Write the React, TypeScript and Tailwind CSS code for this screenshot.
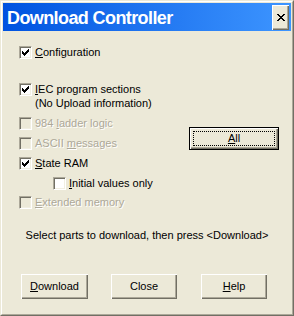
import React from 'react';

const font = { fontFamily: '"Liberation Sans", Arial, sans-serif' };

function Check() {
  return (
    <svg width="7" height="7" viewBox="0 0 7 7" shapeRendering="crispEdges">
      <path
        fill="#000"
        d="M0 2h1v3h-1z M1 3h1v3h-1z M2 4h1v3h-1z M3 3h1v3h-1z M4 2h1v3h-1z M5 1h1v3h-1z M6 0h1v3h-1z"
      />
    </svg>
  );
}

interface BoxProps {
  checked?: boolean;
  disabled?: boolean;
}

function Box({ checked, disabled }: BoxProps) {
  return (
    <span
      className={`flex items-center justify-center w-[13px] h-[13px] shrink-0 border border-t-[#aca899] border-l-[#aca899] border-b-white border-r-white shadow-[inset_1px_1px_0_#716f64,inset_-1px_-1px_0_#f1efe2] ${
        disabled ? 'bg-[#ece9d8]' : 'bg-white'
      }`}
    >
      {checked && <Check />}
    </span>
  );
}

interface RowProps {
  label: string;
  u: number;
  checked?: boolean;
  disabled?: boolean;
  className?: string;
}

function Row({ label, u, checked, disabled, className = '' }: RowProps) {
  return (
    <div className={`flex items-center gap-[3px] h-[13px] ${className}`}>
      <Box checked={checked} disabled={disabled} />
      <span
        className={`text-[11px] leading-[13px] whitespace-nowrap ${
          disabled ? 'text-[#aca899] [text-shadow:1px_1px_0_#fff]' : 'text-black'
        }`}
      >
        {label.slice(0, u)}
        <span className="underline underline-offset-[1px]">{label[u]}</span>
        {label.slice(u + 1)}
      </span>
    </div>
  );
}

const bevel =
  'bg-[#ece9d8] shadow-[inset_1px_1px_0_#fff,inset_-1px_-1px_0_#716f64,inset_-2px_-2px_0_#aca899]';

function Button({ children, className = '' }: { children: React.ReactNode; className?: string }) {
  return (
    <div
      className={`flex items-center justify-center w-[66px] h-[25px] text-[11px] text-black ${bevel} ${className}`}
    >
      {children}
    </div>
  );
}

export default function App() {
  return (
    <div
      style={font}
      className="w-[294px] h-[316px] border border-t-[#ece9d8] border-l-[#ece9d8] border-b-[#716f64] border-r-[#716f64] bg-[#ece9d8]"
    >
      <div className="w-full h-full border border-t-white border-l-white border-b-[#aca899] border-r-[#aca899] p-[1px] flex flex-col">
        {/* title bar */}
        <div className="h-[28px] flex items-center bg-gradient-to-r from-[#0052e0] to-[#3d95ff] pl-[4px] pr-[2px]">
          <span className="text-white font-bold text-[18px] leading-none tracking-[-0.6px] pt-[1px]">
            Download Controller
          </span>
          <div
            className={`ml-auto w-[17px] h-[25px] flex items-center justify-center ${bevel}`}
          >
            <svg width="8" height="7" viewBox="0 0 8 7" shapeRendering="crispEdges">
              <path
                fill="#000"
                d="M0 0h2v1h-2z M6 0h2v1h-2z M1 1h2v1h-2z M5 1h2v1h-2z M2 2h4v1h-4z M3 3h2v1h-2z M2 4h4v1h-4z M1 5h2v1h-2z M5 5h2v1h-2z M0 6h2v1h-2z M6 6h2v1h-2z"
              />
            </svg>
          </div>
        </div>

        {/* body */}
        <div className="flex-1 flex flex-col pt-[15px]">
          <div className="pl-[16px]">
            <Row label="Configuration" u={0} checked />
          </div>

          <div className="flex pl-[16px] mt-[24px]">
            <div className="w-[170px] flex flex-col">
              <Row label="IEC program sections" u={0} checked />
              <div className="mt-[1px] pl-[16px] text-[11px] leading-[13px] text-black">
                (No Upload information)
              </div>
              <Row label="984 ladder logic" u={4} disabled className="mt-[7px]" />
              <Row label="ASCII messages" u={6} disabled className="mt-[7px]" />
              <Row label="State RAM" u={0} checked className="mt-[7px]" />
              <Row label="Initial values only" u={0} className="mt-[7px] ml-[34px]" />
              <Row label="Extended memory" u={0} disabled className="mt-[6px]" />
            </div>
            <div className="mt-[44px]">
              <div className="w-[90px] h-[23px] border border-black">
                <div className="w-full h-full shadow-[inset_1px_1px_0_#fff,inset_-1px_-1px_0_#716f64,inset_-2px_-2px_0_#aca899] p-[3px]">
                  <div className="w-full h-full border border-dotted border-black flex items-center justify-center text-[11px] text-black">
                    <span className="underline underline-offset-[1px]">A</span>ll
                  </div>
                </div>
              </div>
            </div>
          </div>

          <div className="mt-[20px] text-center text-[11px] leading-[13px] text-black">
            Select parts to download, then press &lt;Download&gt;
          </div>

          <div className="flex mt-[32px] pl-[18px]">
            <Button className="w-[67px]">
              <span className="underline underline-offset-[1px]">D</span>ownload
            </Button>
            <Button className="ml-[23px]">Close</Button>
            <Button className="ml-[24px]">
              <span className="underline underline-offset-[1px]">H</span>elp
            </Button>
          </div>
        </div>
      </div>
    </div>
  );
}
